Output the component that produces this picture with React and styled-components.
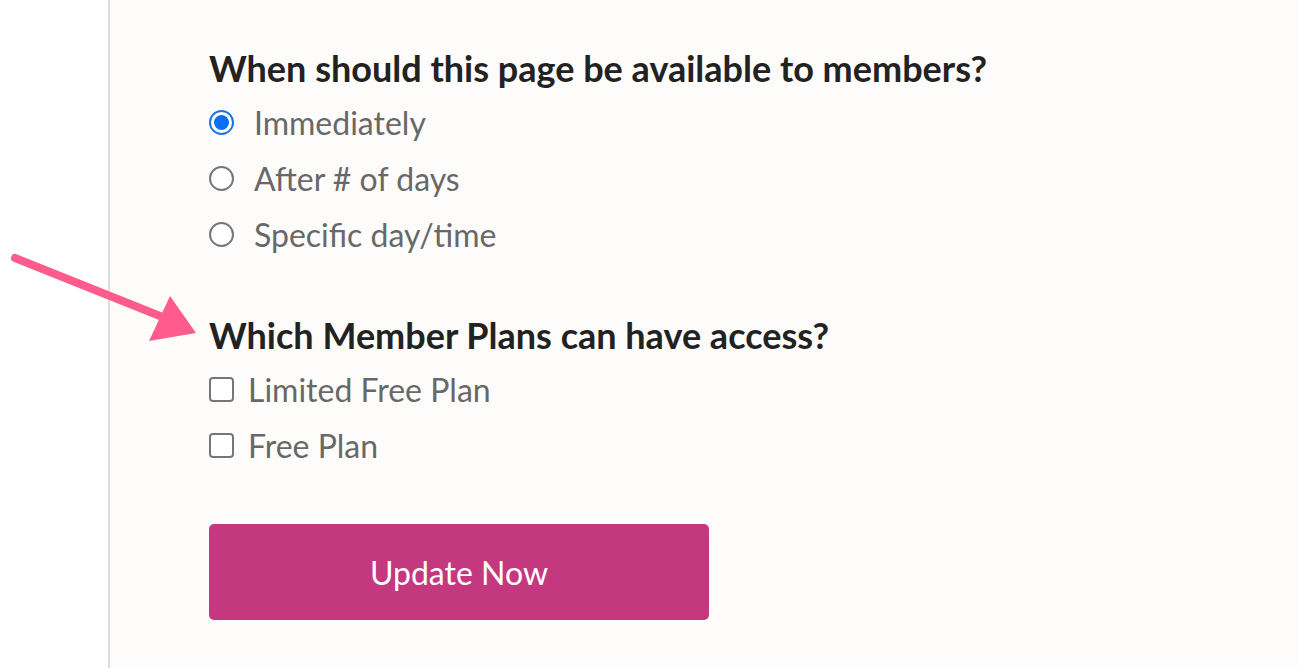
import React from "react";
import styled, { createGlobalStyle } from "styled-components";

const GlobalStyle = createGlobalStyle`
  html, body {
    margin: 0;
    padding: 0;
    height: 100%;
  }
  body {
    font-family: Lato, "Liberation Sans", sans-serif;
    background: #fdfcfb;
  }
  #root {
    height: 100%;
  }
`;

const Page = styled.div`
  position: relative;
  display: flex;
  height: 668px;
  overflow: hidden;
`;

const Sidebar = styled.aside`
  width: 108px;
  flex-shrink: 0;
  background: #ffffff;
  border-right: 2px solid #dedede;
`;

const Main = styled.main`
  flex: 1;
  background: #fdfcfb;
  padding: 42px 0 0 99px;
`;

const Heading = styled.h2`
  margin: 0;
  font-family: Lato, "Liberation Sans", sans-serif;
  font-weight: 700;
  font-size: 36px;
  line-height: 52px;
  color: #222222;
  margin-top: ${(p) => p.$top || 0}px;
`;

const OptionList = styled.div`
  display: flex;
  flex-direction: column;
`;

const Option = styled.label`
  display: flex;
  align-items: center;
  gap: ${(p) => (p.$kind === "radio" ? 20 : 14)}px;
  height: 56px;
  font-size: 32px;
  color: #686868;
`;

const RadioMark = styled.span`
  width: 25px;
  height: 25px;
  box-sizing: border-box;
  border-radius: 50%;
  border: 2px solid ${(p) => (p.$checked ? "#1a73e8" : "#767676")};
  display: flex;
  align-items: center;
  justify-content: center;
  background: #fff;

  &::after {
    content: "";
    display: ${(p) => (p.$checked ? "block" : "none")};
    width: 15px;
    height: 15px;
    border-radius: 50%;
    background: #0b6ff5;
  }
`;

const CheckMark = styled.span`
  width: 25px;
  height: 25px;
  box-sizing: border-box;
  border-radius: 4px;
  border: 2px solid #767676;
  background: #fff;
`;

const Button = styled.button`
  margin-top: 51px;
  width: 500px;
  height: 96px;
  border: none;
  border-radius: 5px;
  background: #c4387f;
  color: #ffffff;
  font-family: Lato, "Liberation Sans", sans-serif;
  font-weight: 400;
  font-size: 32px;
  cursor: pointer;
`;

const Arrow = styled.svg`
  position: absolute;
  left: 0;
  top: 0;
  pointer-events: none;
`;

const radios = [
  { label: "Immediately", checked: true },
  { label: "After # of days" },
  { label: "Specific day/time" },
];

const plans = ["Limited Free Plan", "Free Plan"];

const App = () => {
  return (
    <>
      <GlobalStyle />
      <Page>
        <Sidebar />
        <Main>
          <Heading>When should this page be available to members?</Heading>
          <OptionList>
            {radios.map((r) => (
              <Option key={r.label} $kind="radio">
                <RadioMark $checked={r.checked} />
                {r.label}
              </Option>
            ))}
          </OptionList>
          <Heading $top={47}>Which Member Plans can have access?</Heading>
          <OptionList>
            {plans.map((p) => (
              <Option key={p} $kind="check">
                <CheckMark />
                {p}
              </Option>
            ))}
          </OptionList>
          <Button>Update Now</Button>
        </Main>
        <Arrow width="220" height="360" viewBox="0 0 220 360">
          <line x1="15" y1="258" x2="165" y2="318" stroke="#ff5c8d" strokeWidth="8" strokeLinecap="round" />
          <polygon points="170,296 196,333 149,341" fill="#ff5c8d" />
        </Arrow>
      </Page>
    </>
  );
};

export default App;
